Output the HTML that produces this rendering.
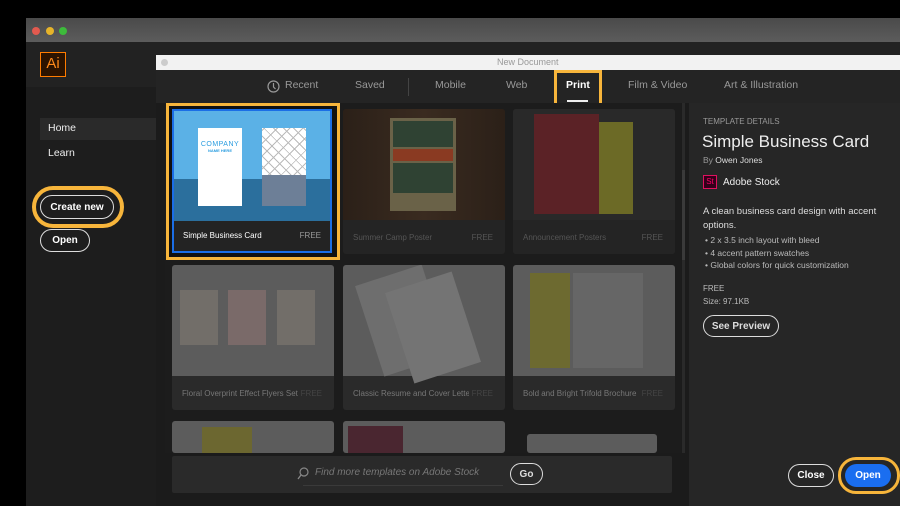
<!DOCTYPE html>
<html><head><meta charset="utf-8"><style>
*{box-sizing:border-box;margin:0;padding:0}
body{width:900px;height:506px;background:#000;font-family:"Liberation Sans",sans-serif;overflow:hidden;position:relative}
.a{position:absolute}
.t{color:#ddd;font-size:10px;white-space:nowrap}
.tab{color:#999;font-size:10.5px;white-space:nowrap}
.btn{position:absolute;border:1.5px solid #ddd;border-radius:12px;color:#fff;font-size:10px;font-weight:bold;background:#1e1e1e;display:flex;align-items:center;justify-content:center}
.card{position:absolute;background:#2a2a2a;border-radius:3px;overflow:hidden}
.lab{position:absolute;left:10px;bottom:12px;font-size:8px;color:#555;white-space:nowrap}
.free{position:absolute;right:12px;bottom:12px;font-size:8px;color:#555}
</style></head><body>
<div class="a" style="left:26px;top:18px;width:874px;height:24px;background:linear-gradient(#4a4a4a,#5c5c5c)"></div>
<div class="a" style="left:32px;top:27px;width:8px;height:8px;border-radius:50%;background:#e25a4f"></div>
<div class="a" style="left:46px;top:27px;width:8px;height:8px;border-radius:50%;background:#e6b42a"></div>
<div class="a" style="left:59px;top:27px;width:8px;height:8px;border-radius:50%;background:#3dbb3b"></div>
<div class="a" style="left:26px;top:42px;width:874px;height:464px;background:#1d1d1d"></div>
<div class="a" style="left:26px;top:42px;width:874px;height:45px;background:#222"></div>
<div class="a" style="left:40px;top:52px;width:26px;height:25px;border:1.5px solid #ff7c00;background:#2b1300;color:#ff8a1a;font-size:15px;text-align:center;line-height:22px">Ai</div>
<div class="a" style="left:40px;top:118px;width:116px;height:22px;background:#2a2a2a"></div>
<div class="a t" style="left:48px;top:122px;color:#eee;font-size:10.5px">Home</div>
<div class="a t" style="left:48px;top:147px;color:#eee;font-size:10.5px">Learn</div>
<div class="a" style="left:32px;top:186px;width:92px;height:42px;border:4px solid #f7b53b;border-radius:21px"></div>
<div class="btn" style="left:40px;top:195px;width:74px;height:24px">Create new</div>
<div class="btn" style="left:40px;top:229px;width:50px;height:23px">Open</div>
<div class="a" style="left:156px;top:55px;width:744px;height:15px;background:#f2f2f2"></div>
<div class="a" style="left:161px;top:59px;width:7px;height:7px;border-radius:50%;background:#ccc"></div>
<div class="a" style="left:497px;top:57px;font-size:9px;color:#999">New Document</div>
<div class="a" style="left:156px;top:70px;width:744px;height:436px;background:#1b1b1b"></div>
<div class="a" style="left:156px;top:70px;width:744px;height:33px;background:#242424"></div>
<svg class="a" style="left:267px;top:80px" width="13" height="13"><circle cx="6.5" cy="6.5" r="5.5" fill="none" stroke="#999" stroke-width="1.2"/><path d="M6.5 3v4l2 2" fill="none" stroke="#999" stroke-width="1.2"/></svg>
<div class="a tab" style="left:285px;top:79px">Recent</div>
<div class="a tab" style="left:355px;top:79px">Saved</div>
<div class="a" style="left:408px;top:78px;width:1px;height:18px;background:#444"></div>
<div class="a tab" style="left:435px;top:79px">Mobile</div>
<div class="a tab" style="left:506px;top:79px">Web</div>
<div class="a" style="left:554px;top:70px;width:48px;height:39px;border:3px solid #f7b53b"></div>
<div class="a tab" style="left:566px;top:79px;color:#fff;font-weight:bold">Print</div>
<div class="a" style="left:567px;top:100px;width:21px;height:2px;background:#eee"></div>
<div class="a tab" style="left:628px;top:79px">Film &amp; Video</div>
<div class="a tab" style="left:724px;top:79px">Art &amp; Illustration</div>
<div class="a" style="left:165px;top:103px;width:516px;height:350px;background:#1c1c1c"></div>
<div class="card" style="left:343px;top:109px;width:162px;height:145px;background:#241d18"><div class="a" style="left:0;top:0;width:162px;height:111px;background:linear-gradient(90deg,#2b2018,#3a2b20,#2b2018)"></div><div class="a" style="left:47px;top:9px;width:66px;height:93px;background:#6a6248"><div class="a" style="left:3px;top:3px;width:60px;height:26px;background:#2f4233"></div><div class="a" style="left:3px;top:31px;width:60px;height:12px;background:#8a3a22"></div><div class="a" style="left:3px;top:45px;width:60px;height:30px;background:#2f4233"></div></div><div class="a" style="left:0;top:111px;width:162px;height:34px;background:#242424"></div><div class="lab">Summer Camp Poster</div><div class="free">FREE</div></div>
<div class="card" style="left:513px;top:109px;width:162px;height:145px"><div class="a" style="left:0;top:0;width:162px;height:111px;background:#292929"></div><div class="a" style="left:60px;top:13px;width:60px;height:92px;background:#6c6a26"></div><div class="a" style="left:21px;top:5px;width:65px;height:100px;background:#5b2226"></div><div class="a" style="left:0;top:111px;width:162px;height:34px;background:#242424"></div><div class="lab">Announcement Posters</div><div class="free">FREE</div></div>
<div class="a" style="left:166px;top:103px;width:174px;height:157px;border:3px solid #f7b53b;background:#111"></div>
<div class="a" style="left:172px;top:109px;width:160px;height:144px;border:2px solid #1b6ee6;background:#232323;overflow:hidden">
<div class="a" style="left:0;top:0;width:156px;height:68px;background:#5bb1e6"></div>
<div class="a" style="left:0;top:68px;width:156px;height:42px;background:#2b6f9d"></div>
<div class="a" style="left:24px;top:17px;width:44px;height:78px;background:#fff"><div style="font-size:7px;color:#2a9de0;text-align:center;margin-top:13px;letter-spacing:.5px">COMPANY</div><div style="font-size:4px;color:#2a9de0;text-align:center;font-weight:bold">NAME HERE</div></div>
<div class="a" style="left:88px;top:17px;width:44px;height:47px;background:#fff;background-image:repeating-linear-gradient(45deg,transparent 0 6px,#bbb 6px 7px),repeating-linear-gradient(-45deg,transparent 0 8px,#bbb 8px 9px)"></div>
<div class="a" style="left:88px;top:64px;width:44px;height:31px;background:#6d7f97"></div>
<div class="a" style="left:9px;top:120px;font-size:8px;color:#fff">Simple Business Card</div>
<div class="a" style="right:9px;top:120px;font-size:8px;color:#999">FREE</div>
</div>
<div class="card" style="left:172px;top:265px;width:162px;height:145px"><div class="a" style="left:0;top:0;width:162px;height:111px;background:#5c5c5c"></div><div class="a" style="left:8px;top:25px;width:38px;height:55px;background:#726e69"></div><div class="a" style="left:56px;top:25px;width:38px;height:55px;background:#7a6a69"></div><div class="a" style="left:105px;top:25px;width:38px;height:55px;background:#726e69"></div><div class="lab" style="color:#777">Floral Overprint Effect Flyers Set</div><div class="free" style="color:#444">FREE</div></div>
<div class="card" style="left:343px;top:265px;width:162px;height:145px"><div class="a" style="left:0;top:0;width:162px;height:111px;background:#5c5c5c"></div><div class="a" style="left:25px;top:8px;width:70px;height:95px;background:#6e6e6e;transform:rotate(-18deg)"></div><div class="a" style="left:55px;top:15px;width:70px;height:95px;background:#747474;transform:rotate(-18deg)"></div><div class="lab" style="color:#777">Classic Resume and Cover Letter...</div><div class="free" style="color:#444;background:#2a2a2a;padding-left:3px">FREE</div></div>
<div class="card" style="left:513px;top:265px;width:162px;height:145px"><div class="a" style="left:0;top:0;width:162px;height:111px;background:#5c5c5c"></div><div class="a" style="left:17px;top:8px;width:40px;height:95px;background:#6d6a30"></div><div class="a" style="left:60px;top:8px;width:70px;height:95px;background:#666"></div><div class="lab" style="color:#777">Bold and Bright Trifold Brochure ...</div><div class="free" style="color:#444;background:#2a2a2a;padding-left:3px">FREE</div></div>
<div class="card" style="left:172px;top:421px;width:162px;height:32px;background:#5c5c5c"><div class="a" style="left:30px;top:6px;width:50px;height:30px;background:#6c6730"></div></div>
<div class="card" style="left:343px;top:421px;width:162px;height:32px;background:#5c5c5c"><div class="a" style="left:5px;top:5px;width:55px;height:30px;background:#4a2630"></div></div>
<div class="card" style="left:527px;top:434px;width:130px;height:19px;background:#5c5c5c"></div>
<div class="a" style="left:682px;top:103px;width:3px;height:350px;background:#2a2a2a"></div>
<div class="a" style="left:682px;top:170px;width:3px;height:90px;background:#3a3a3a"></div>
<div class="a" style="left:172px;top:456px;width:500px;height:37px;background:#2a2a2a;border-radius:2px"></div>
<svg class="a" style="left:297px;top:467px" width="12" height="13"><circle cx="7" cy="5" r="4" fill="none" stroke="#888" stroke-width="1.2"/><path d="M4 8L1 12" stroke="#888" stroke-width="1.3"/></svg>
<div class="a" style="left:315px;top:467px;font-size:10px;color:#777;font-style:italic">Find more templates on Adobe Stock</div>
<div class="a" style="left:303px;top:485px;width:200px;height:1px;background:#3a3a3a"></div>
<div class="btn" style="left:510px;top:463px;width:33px;height:22px;background:#2a2a2a;color:#ddd">Go</div>
<div class="a" style="left:689px;top:103px;width:211px;height:403px;background:#262626"></div>
<div class="a" style="left:703px;top:117px;font-size:8px;color:#999">TEMPLATE DETAILS</div>
<div class="a" style="left:702px;top:132px;font-size:17px;color:#eee">Simple Business Card</div>
<div class="a" style="left:703px;top:155px;font-size:8.5px;color:#999">By <span style="color:#ddd">Owen Jones</span></div>
<div class="a" style="left:703px;top:175px;width:14px;height:14px;border:1px solid #e0115f;background:#33001a;color:#f06;font-size:8px;text-align:center;line-height:12px">St</div>
<div class="a" style="left:723px;top:177px;font-size:10px;color:#eee">Adobe Stock</div>
<div class="a" style="left:703px;top:205px;font-size:9.5px;color:#ddd;width:180px;line-height:14px">A clean business card design with accent options.</div>
<div class="a" style="left:705px;top:234px;font-size:8.5px;color:#bbb;line-height:12.5px">• 2 x 3.5 inch layout with bleed<br>• 4 accent pattern swatches<br>• Global colors for quick customization</div>
<div class="a" style="left:703px;top:282px;font-size:8px;color:#bbb;line-height:13px">FREE<br>Size: 97.1KB</div>
<div class="btn" style="left:703px;top:315px;width:76px;height:22px;background:#262626;color:#ddd">See Preview</div>
<div class="btn" style="left:788px;top:464px;width:46px;height:23px;background:#262626">Close</div>
<div class="a" style="left:838px;top:457px;width:62px;height:37px;border:3px solid #f7b53b;border-radius:18px"></div>
<div class="a" style="left:845px;top:464px;width:46px;height:23px;border-radius:12px;background:#1a6ef0;color:#fff;font-size:10px;font-weight:bold;text-align:center;line-height:23px">Open</div>
</body></html>
